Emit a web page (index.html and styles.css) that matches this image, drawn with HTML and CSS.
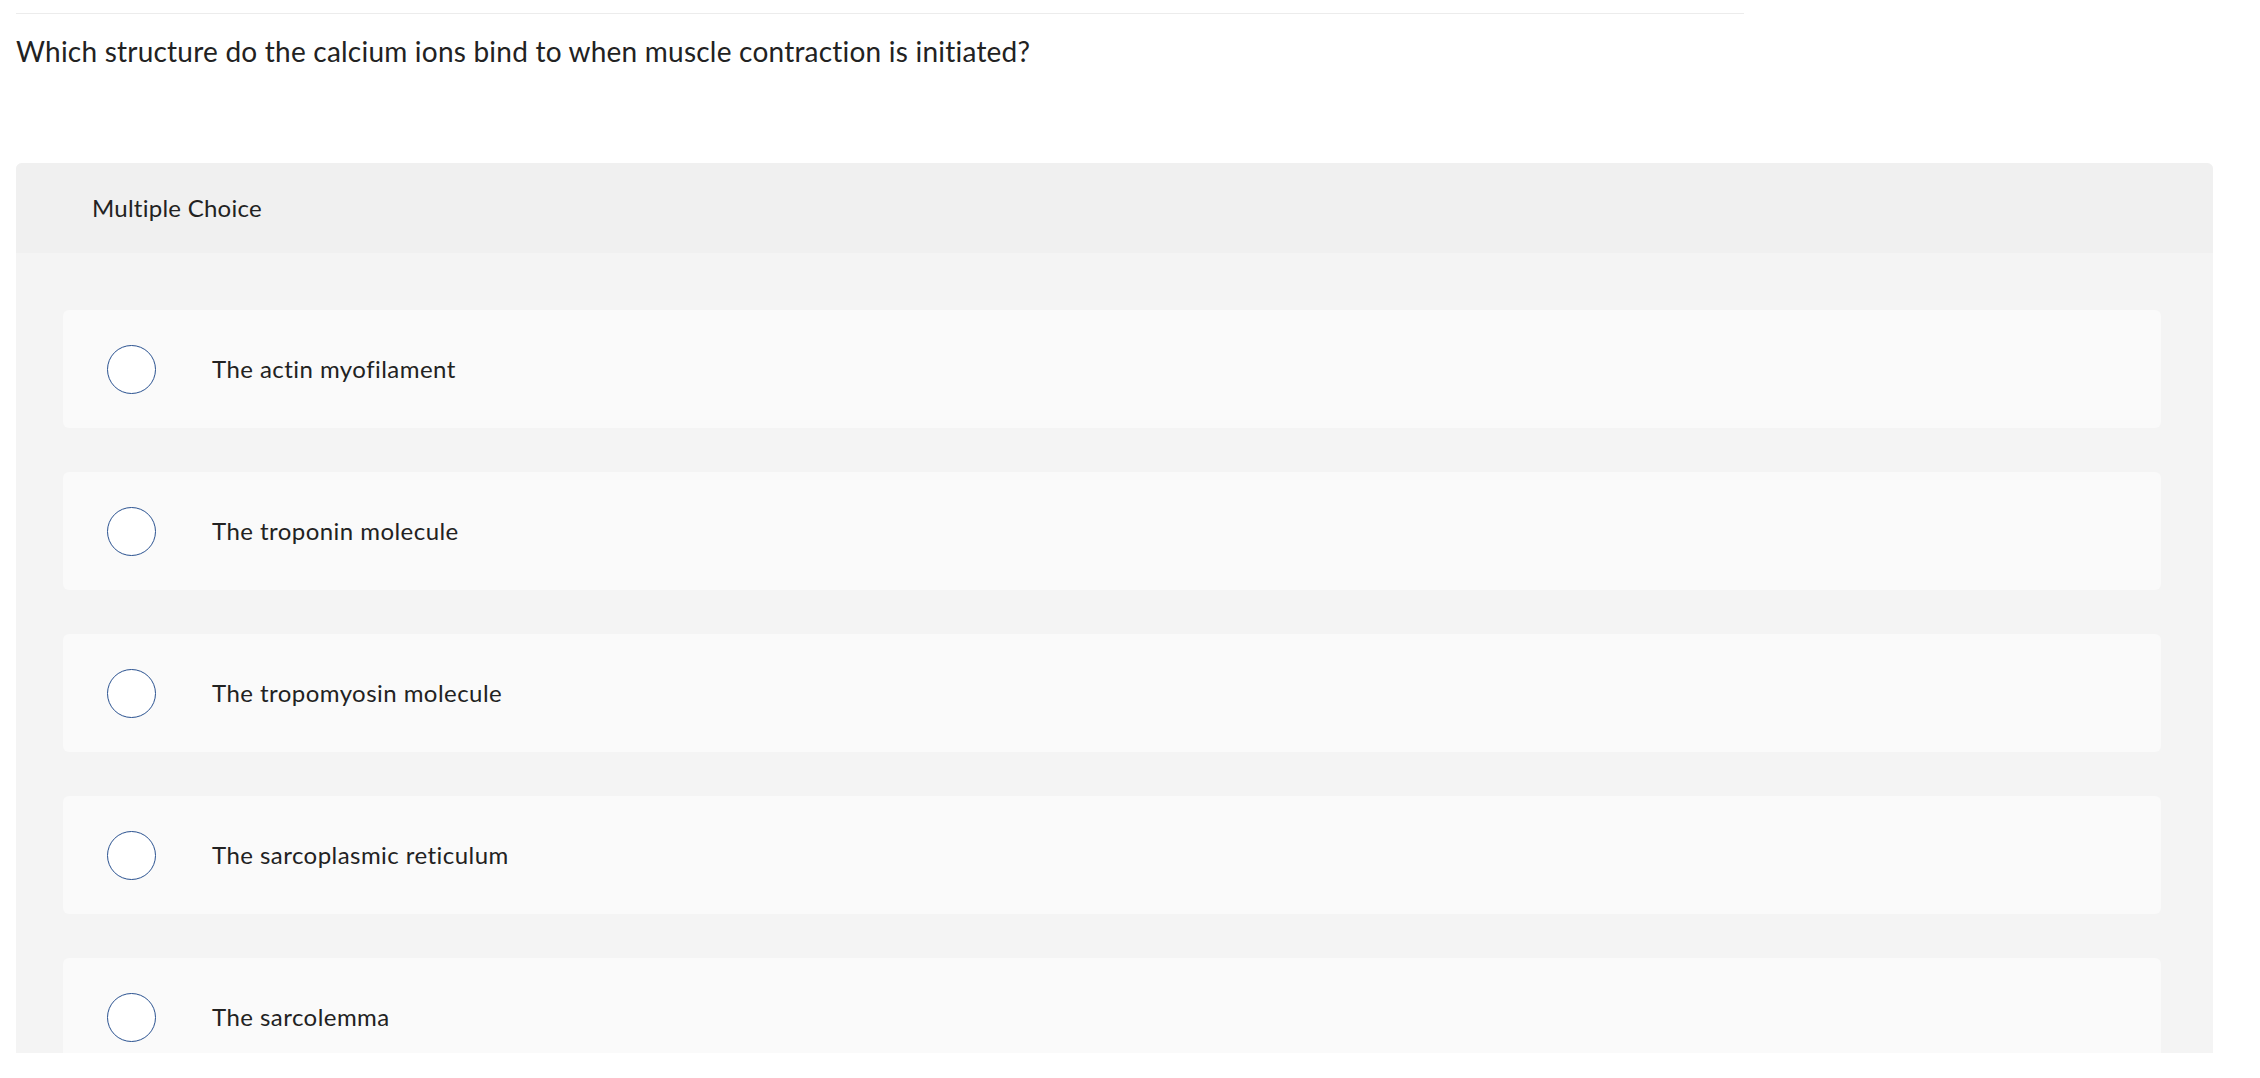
FILE: index.html
```html
<!DOCTYPE html>
<html lang="en">
<head>
<meta charset="utf-8">
<title>Multiple Choice</title>
<link rel="stylesheet" href="styles.css">
</head>
<body>
<div class="page">
  <div class="rule"></div>
  <p class="question">Which structure do the calcium ions bind to when muscle contraction is initiated?</p>
  <section class="card">
    <header class="card-header">Multiple Choice</header>
    <div class="card-body">
      <label class="option"><span class="radio"></span><span class="option-text">The actin myofilament</span></label>
      <label class="option"><span class="radio"></span><span class="option-text">The troponin molecule</span></label>
      <label class="option"><span class="radio"></span><span class="option-text">The tropomyosin molecule</span></label>
      <label class="option"><span class="radio"></span><span class="option-text">The sarcoplasmic reticulum</span></label>
      <label class="option"><span class="radio"></span><span class="option-text">The sarcolemma</span></label>
    </div>
  </section>
</div>
</body>
</html>
```

FILE: styles.css
```css
* { box-sizing: border-box; }
html, body { margin: 0; padding: 0; background: #ffffff; }
body {
  font-family: "Lato", "Liberation Sans", sans-serif;
  color: #222222;
  font-variant-ligatures: none;
}
.page {
  height: 1053px;
  overflow: hidden;
  padding: 13px 0 0 16px;
  display: flex;
  flex-direction: column;
}
.rule {
  width: 1728px;
  height: 0;
  border-top: 1px solid #ececec;
}
.question {
  margin: 17px 0 0 0;
  font-size: 28px;
  line-height: 40px;
  letter-spacing: 0.22px;
}
.card {
  margin-top: 92px;
  width: 2197px;
  flex: 1;
  background: #f4f4f4;
  border-radius: 6px 6px 0 0;
  overflow: hidden;
}
.card-header {
  height: 90px;
  background: #f0f0f0;
  padding: 0 0 2px 76px;
  display: flex;
  align-items: center;
  font-size: 24px;
  letter-spacing: 0.25px;
}
.card-body {
  padding: 57px 52px 0 47px;
  display: flex;
  flex-direction: column;
  gap: 44px;
}
.option {
  height: 118px;
  flex: none;
  background: #fafafa;
  border-radius: 6px;
  display: flex;
  align-items: center;
  padding-left: 44px;
  font-size: 24px;
  letter-spacing: 0.45px;
}
.option-text {
  margin-top: -2px;
}
.radio {
  width: 49px;
  height: 49px;
  border: 1.5px solid #2a5290;
  border-radius: 50%;
  background: #ffffff;
  margin-right: 56px;
  flex: none;
}
```
